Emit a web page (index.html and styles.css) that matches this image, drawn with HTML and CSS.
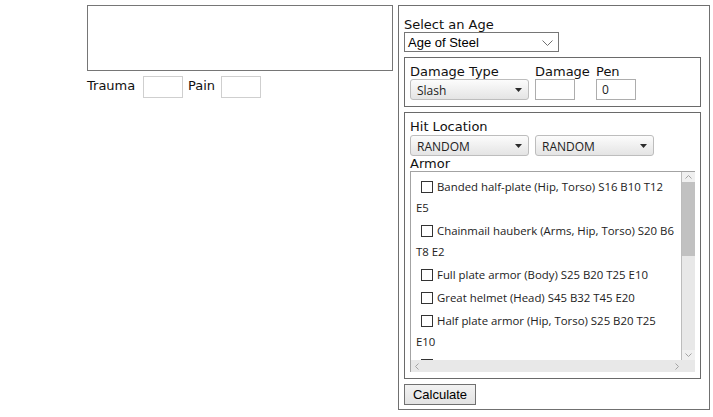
FILE: index.html
```html
<!DOCTYPE html>
<html lang="en">
<head>
<meta charset="utf-8">
<title>Damage Calculator</title>
<link rel="stylesheet" href="styles.css">
</head>
<body>
<div class="page">
  <div class="left">
    <div class="notes"></div>
    <div class="stats">
      <span class="lbl lbl-trauma">Trauma</span>
      <input class="stat-input" type="text">
      <span class="lbl lbl-pain">Pain</span>
      <input class="stat-input" type="text">
    </div>
  </div>

  <div class="panel">
    <div class="lbl">Select an Age</div>
    <div class="age-select">
      <span>Age of Steel</span>
      <svg class="chev" width="11" height="6" viewBox="0 0 11 6"><polyline points="0.5,0.5 5.5,5.5 10.5,0.5" fill="none" stroke="#6f6f6f" stroke-width="1"/></svg>
    </div>

    <div class="box dmg">
      <div class="col col-type">
        <div class="lbl">Damage Type</div>
        <div class="dd"><span>Slash</span><svg width="7" height="4" viewBox="0 0 7 4"><polygon points="0,0 7,0 3.5,4" fill="#2b2b2b"/></svg></div>
      </div>
      <div class="col col-dmg">
        <div class="lbl">Damage</div>
        <input class="small-input" type="text">
      </div>
      <div class="col">
        <div class="lbl">Pen</div>
        <input class="small-input" type="text" value="0">
      </div>
    </div>

    <div class="box hit">
      <div class="lbl">Hit Location</div>
      <div class="dd-row">
        <div class="dd"><span>RANDOM</span><svg width="7" height="4" viewBox="0 0 7 4"><polygon points="0,0 7,0 3.5,4" fill="#2b2b2b"/></svg></div>
        <div class="dd"><span>RANDOM</span><svg width="7" height="4" viewBox="0 0 7 4"><polygon points="0,0 7,0 3.5,4" fill="#2b2b2b"/></svg></div>
      </div>
      <div class="lbl">Armor</div>
      <div class="armor">
        <div class="armor-list">
          <div class="item"><input type="checkbox">Banded half-plate (Hip, Torso) S16 B10 T12 E5</div>
          <div class="item"><input type="checkbox">Chainmail hauberk (Arms, Hip, Torso) S20 B6 T8 E2</div>
          <div class="item"><input type="checkbox">Full plate armor (Body) S25 B20 T25 E10</div>
          <div class="item"><input type="checkbox">Great helmet (Head) S45 B32 T45 E20</div>
          <div class="item"><input type="checkbox">Half plate armor (Hip, Torso) S25 B20 T25 E10</div>
          <div class="item"><input type="checkbox"></div>
        </div>
        <div class="vscroll">
          <div class="varrow"><svg width="7" height="4" viewBox="0 0 7 4"><polyline points="0.5,3.5 3.5,0.5 6.5,3.5" fill="none" stroke="#a3a3a3" stroke-width="1"/></svg></div>
          <div class="vthumb"></div>
          <div class="vtrack"></div>
          <div class="varrow"><svg width="7" height="4" viewBox="0 0 7 4"><polyline points="0.5,0.5 3.5,3.5 6.5,0.5" fill="none" stroke="#a3a3a3" stroke-width="1"/></svg></div>
        </div>
        <div class="hscroll">
          <svg width="4" height="7" viewBox="0 0 4 7"><polyline points="3.5,0.5 0.5,3.5 3.5,6.5" fill="none" stroke="#a3a3a3" stroke-width="1"/></svg>
          <svg width="4" height="7" viewBox="0 0 4 7"><polyline points="0.5,0.5 3.5,3.5 0.5,6.5" fill="none" stroke="#a3a3a3" stroke-width="1"/></svg>
        </div>
        <div class="corner"></div>
      </div>
    </div>

    <button class="calc" type="button">Calculate</button>
  </div>
</div>
</body>
</html>
```

FILE: styles.css
```css
body {
  margin: 0;
  background: #fff;
  color: #000;
  font-family: "DejaVu Sans", Verdana, sans-serif;
  font-size: 13px;
}

.page {
  display: flex;
  align-items: flex-start;
  gap: 5px;
  padding: 5px 0 0 87px;
}

.left {
  width: 306px;
}

.notes {
  height: 66px;
  box-sizing: border-box;
  border: 1px solid #767676;
}

.stats {
  display: flex;
  align-items: flex-start;
  margin-top: 5px;
}

.stats .lbl {
  margin-top: 2px;
}

.lbl-trauma {
  width: 56px;
}

.lbl-pain {
  width: 33px;
}

.stat-input {
  width: 40px;
  height: 22px;
  box-sizing: border-box;
  border: 1px solid #cfcfcf;
  margin: 0 5px 0 0;
  padding: 0;
}

.lbl {
  display: block;
  line-height: 15px;
  white-space: nowrap;
  color: #111;
}

.panel {
  width: 312px;
  box-sizing: border-box;
  border: 1px solid #707070;
  padding: 11px 0 4px 5px;
}

.age-select {
  width: 155px;
  height: 20px;
  box-sizing: border-box;
  border: 1px solid #767676;
  display: flex;
  align-items: center;
  justify-content: space-between;
  padding: 0 5px 0 3px;
  font-family: "Liberation Sans", Arial, sans-serif;
  font-size: 13px;
}

.age-select .chev {
  margin-top: 1px;
}

.box {
  width: 297px;
  box-sizing: border-box;
  border: 1px solid #6a6a6a;
  padding: 6px 5px 6px 5px;
  margin-top: 5px;
}

.dmg {
  display: flex;
}

.col-type {
  width: 119px;
  margin-right: 6px;
}

.col-dmg {
  width: 57px;
  margin-right: 4px;
}

.small-input {
  display: block;
  width: 40px;
  height: 21px;
  box-sizing: border-box;
  border: 1px solid #adadad;
  margin: 0;
  padding: 0 0 0 5px;
  font-family: "Open Sans", sans-serif;
  font-size: 12px;
  color: #222;
}

.dd {
  width: 119px;
  height: 21px;
  box-sizing: border-box;
  border: 1px solid #bdbdbd;
  border-radius: 3px;
  background: linear-gradient(#fcfcfc, #e4e4e4);
  display: flex;
  align-items: center;
  justify-content: space-between;
  padding: 1px 6px 0;
  font-family: "Open Sans", sans-serif;
  font-size: 12px;
  color: #222;
}

.dd svg {
  margin-top: -1px;
}

.dd-row {
  display: flex;
  gap: 6px;
  margin-top: 1px;
}

.armor {
  display: grid;
  grid-template-columns: 1fr 13px;
  grid-template-rows: 188px 12px;
  width: 285px;
  height: 201px;
  box-sizing: border-box;
  border-top: 1px solid #a3a3a3;
  border-left: 1px solid #a3a3a3;
}

.armor-list {
  overflow: hidden;
  padding: 2px 4px 0 5px;
  border-right: 1px solid #bcbcbc;
  font-family: "Open Sans", sans-serif;
  font-size: 11.4px;
  line-height: 21px;
  color: #222;
}

.item {
  padding-top: 2px;
}

.item input {
  appearance: none;
  -webkit-appearance: none;
  width: 12px;
  height: 12px;
  box-sizing: border-box;
  border: 1px solid #333;
  background: #fff;
  margin: 0 4px 0 5px;
  vertical-align: -2px;
}

.vscroll {
  display: flex;
  flex-direction: column;
  background: #e8e8e8;
}

.varrow {
  height: 10px;
  display: flex;
  align-items: center;
  justify-content: center;
  background: #f0f0f0;
}

.vthumb {
  height: 74px;
  background: #c1c1c1;
}

.vtrack {
  flex: 1;
}

.hscroll {
  background: #e8e8e8;
  display: flex;
  align-items: center;
  justify-content: space-between;
  padding: 0 3px 0 4px;
}

.corner {
  background: #e8e8e8;
}

.calc {
  display: block;
  margin-top: 5px;
  width: 72px;
  height: 21px;
  box-sizing: border-box;
  padding: 0;
  border: 1px solid #707070;
  border-radius: 0;
  background: linear-gradient(#f2f2f2, #e2e2e2);
  font-family: "Liberation Sans", Arial, sans-serif;
  font-size: 13px;
  color: #000;
}
```
